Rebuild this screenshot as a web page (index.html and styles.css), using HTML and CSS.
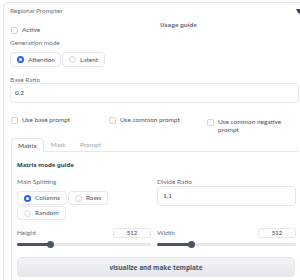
FILE: index.html
```html
<!DOCTYPE html>
<html>
<head>
<meta charset="utf-8">
<link rel="stylesheet" href="styles.css">
</head>
<body>
<div class="panel">
  <div class="head">
    <span class="title">Regional Prompter</span>
    <span class="caret"></span>
  </div>
  <div class="row1">
    <label class="check active-check"><span class="box"></span>Active</label>
    <div class="guide">Usage guide</div>
  </div>
  <div class="label gen">Generation mode</div>
  <div class="radios">
    <span class="radio sel"><span class="dot"></span>Attention</span>
    <span class="radio"><span class="dot"></span>Latent</span>
  </div>
  <div class="label base">Base Ratio</div>
  <div class="input">0.2</div>
  <div class="checks">
    <label class="check"><span class="box"></span>Use base prompt</label>
    <label class="check"><span class="box"></span>Use common prompt</label>
    <label class="check"><span class="box"></span><span class="wrap">Use common negative prompt</span></label>
  </div>
  <div class="tabs">
    <div class="tabbar">
      <span class="tab on">Matrix</span>
      <span class="tab">Mask</span>
      <span class="tab">Prompt</span>
    </div>
    <div class="tabbody">
      <div class="guide2">Matrix mode guide</div>
      <div class="cols">
        <div class="col">
          <div class="label">Main Splitting</div>
          <div class="radios r2">
            <span class="radio sel"><span class="dot"></span>Columns</span>
            <span class="radio"><span class="dot"></span>Rows</span>
            <span class="radio"><span class="dot"></span>Random</span>
          </div>
        </div>
        <div class="col">
          <div class="label dr">Divide Ratio</div>
          <div class="input small">1,1</div>
        </div>
      </div>
      <div class="cols sliders">
        <div class="slider">
          <div class="shead"><span class="label">Height</span><span class="num">512</span></div>
          <div class="track"><div class="fill" style="width:25%"></div></div>
        </div>
        <div class="slider">
          <div class="shead"><span class="label">Width</span><span class="num">512</span></div>
          <div class="track"><div class="fill" style="width:25%"></div></div>
        </div>
      </div>
      <button class="btn">visualize and make template</button>
    </div>
  </div>
</div>
</body>
</html>
```

FILE: styles.css
```css
* { box-sizing: border-box; }
html, body { margin: 0; padding: 0; background: #fff; overflow: hidden; }
body {
  width: 300px; height: 280px;
  padding: 2px 0 0 3px;
  font-family: Lato, "Liberation Sans", sans-serif;
  font-size: 6.5px;
  line-height: 8px;
  color: #4b5563;
}
.panel {
  width: 303px;
  border: 1px solid #e5e7eb;
  border-bottom: none;
  border-radius: 5px 5px 0 0;
  padding: 4px 6px 0 6px;
  height: 278px;
}
.head { display: flex; justify-content: space-between; align-items: center; height: 8px; }
.title { color: #6b7280; }
.caret {
  width: 0; height: 0;
  border-left: 3px solid transparent;
  border-right: 3px solid transparent;
  border-top: 5px solid #374151;
  margin-right: -3px;
}
.row1 { display: grid; grid-template-columns: 150px 1fr; margin-top: 4px; height: 14px; }
.guide { font-family: "Noto Sans", "Open Sans", sans-serif; font-size: 6px; font-weight: 700; color: #6b7280; margin-top: 2px; }
.check { display: flex; align-items: center; gap: 4px; color: #4b5563; }
.active-check { align-self: end; margin-bottom: -1px; padding-left: 1px; }
.box { width: 7px; height: 7px; border: 1px solid #d1d5db; border-radius: 2px; background: #fff; flex: none; }
.label { color: #6b7280; }
.gen { margin-top: 6px; }
.radios { display: flex; gap: 1px; margin-top: 5px; }
.radio {
  display: flex; align-items: center; gap: 4px;
  height: 15px; padding: 0 6px 0 6px;
  border: 1px solid #e5e7eb; border-radius: 4px;
  background: #fff; color: #4b5563;
}
.dot { width: 7px; height: 7px; border-radius: 50%; border: 1px solid #d1d5db; background: #fff; flex: none; }
.sel .dot { border: 2px solid #2563eb; background: #fff; }
.radios > .radio:first-child { width: 51px; }
.base { margin-top: 9px; margin-bottom: -1px; }
.input {
  margin-top: 0;
  height: 20px; border: 1px solid #e5e7eb; border-radius: 4px;
  padding: 0 4px; display: flex; align-items: center; color: #374151;
}
.checks { display: grid; grid-template-columns: 98px 98px 1fr; margin-top: 13px; height: 16px; align-items: start; padding-left: 1px; }
.checks .check { align-items: flex-start; }
.checks .check .box { margin-top: 1px; }
.checks .check:last-child { margin-top: 2px; }
.wrap { width: 75px; }
.tabs { margin-top: 6px; }
.tabbar { display: flex; height: 14px; border-bottom: 1px solid #e5e7eb; padding-left: 1px; }
.tab { padding: 0 7px; height: 14px; display: flex; align-items: center; color: #9ca3af; }
.tab.on { color: #374151; border: 1px solid #e5e7eb; border-bottom: 1px solid #fff; border-radius: 4px 4px 0 0; height: 15px; padding: 0 6px; background: #fff; }
.tabbody { border-left: 1px solid #e5e7eb; margin-left: 1px; padding: 9px 3px 0 5px; height: 140px; }
.guide2 { font-family: "Noto Sans", "Open Sans", sans-serif; font-size: 6px; font-weight: 700; color: #374151; }
.cols { display: grid; grid-template-columns: 134px 1fr; column-gap: 6px; }
.col .label { margin-top: 9px; }
.col .dr { margin-top: 9px; }
.r2 { flex-wrap: wrap; gap: 1px; margin-top: 5px; width: 100px; }
.r2 .radio { height: 14px; }
.r2 .radio:first-child { width: 50px; }
.input.small { height: 20px; margin-top: 0; padding-left: 5px; }
.sliders { margin-top: 7px; }
.shead { display: flex; justify-content: space-between; align-items: center; height: 11px; }
.num { width: 38px; height: 10px; border: 1px solid #e5e7eb; border-radius: 3px; text-align: center; line-height: 8px; font-size: 6px; color: #374151; }
.track { position: relative; margin-top: 5px; height: 3px; background: #e5e7eb; border-radius: 2px; }
.fill { height: 3px; background: #4b5563; border-radius: 2px; position: relative; }
.fill::after { content: ""; position: absolute; right: -3px; top: -2px; width: 7px; height: 7px; border-radius: 50%; background: #4b5563; }
.btn {
  display: block; width: 278px; height: 20px; margin-top: 11px;
  border: 1px solid #e5e7eb; border-radius: 4px;
  background: linear-gradient(#f3f4f6, #e5e7eb);
  font-family: "Noto Sans", "Open Sans", sans-serif; font-size: 6.5px; font-weight: 700; color: #4b5563;
}
```
